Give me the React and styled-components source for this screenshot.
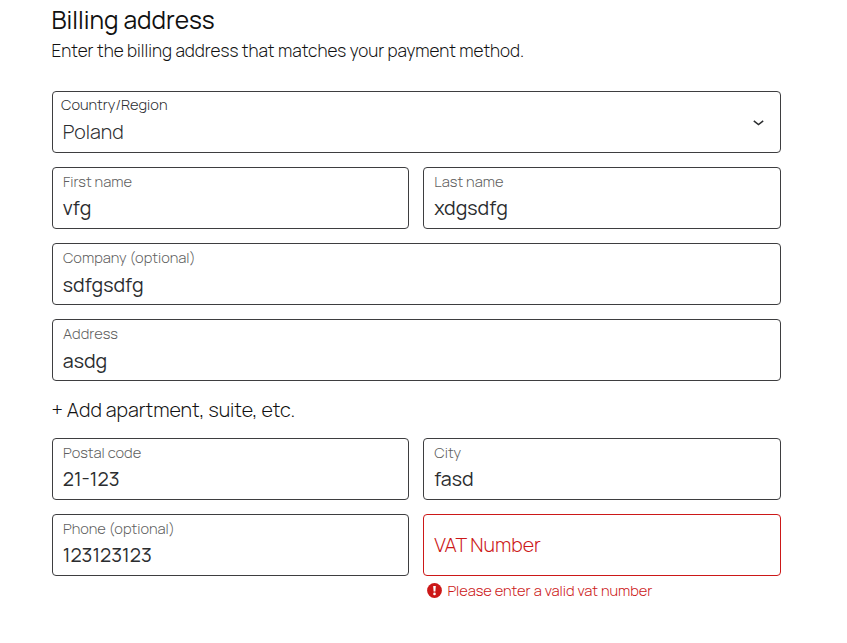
import React from "react";
import styled, { createGlobalStyle } from "styled-components";

const GlobalStyle = createGlobalStyle`
  * { box-sizing: border-box; }
  body { margin: 0; background: #fff; }
`;

const Page = styled.main`
  width: 781px;
  padding: 5px 0 0 51.6px;
  font-family: "Manrope", "Inter", sans-serif;
  color: #111;
`;

const Title = styled.h2`
  margin: 0;
  font-size: 24.5px;
  line-height: 30px;
  font-weight: 400;
`;

const Intro = styled.p`
  margin: 0 0 27px;
  padding-top: 2px;
  font-size: 17.15px;
  line-height: 27px;
  font-weight: 300;
`;

const Form = styled.form`
  display: flex;
  flex-direction: column;
  gap: 14px;
`;

const Row = styled.div`
  display: grid;
  grid-template-columns: 357px 1fr;
  gap: 14.4px;
`;

const Box = styled.div`
  display: flex;
  align-items: center;
  justify-content: space-between;
  height: 62px;
  padding: 0 16px 0 10.2px;
  border: 1px solid ${(p) => (p.$error ? "#cc1818" : "#3e3e40")};
  border-radius: 4px;
`;

const Stack = styled.div`
  display: flex;
  flex-direction: column;
  height: 60px;
  padding-top: ${(p) => (p.$select ? "2px" : "3px")};
`;

const Label = styled.span`
  margin-left: ${(p) => (p.$select ? "-1.8px" : "0.2px")};
  font-size: 14.7px;
  line-height: 20px;
  font-weight: 300;
  color: ${(p) => (p.$select ? "#2b2d2f" : "#5f5f61")};
`;

const Value = styled.span`
  margin-top: ${(p) => (p.$select || p.$low ? "5px" : "4px")};
  font-size: 19.6px;
  line-height: 26px;
  font-weight: ${(p) => (p.$select ? 300 : 400)};
  color: #2b2d2f;
`;

const Placeholder = styled.span`
  font-size: 19.6px;
  font-weight: 300;
  line-height: 26px;
  color: #cc1818;
`;

const AddLine = styled.div`
  height: 29px;
  line-height: 29px;
  font-size: 19.6px;
  font-weight: 300;
`;

const ErrorLine = styled.div`
  display: flex;
  align-items: center;
  gap: 5.4px;
  height: 20px;
  margin-top: 4px;
  padding-left: 4px;
  font-size: 14.7px;
  font-weight: 300;
  line-height: 20px;
  color: #cc1818;
`;

const AlertIcon = styled.svg`
  margin-top: 0.4px;
`;

const Chevron = styled.svg`
  margin-top: 2px;
`;

function Field({ label, value, select, low }) {
  return (
    <Box>
      <Stack $select={select}>
        <Label $select={select}>{label}</Label>
        <Value $select={select} $low={low}>{value}</Value>
      </Stack>
      {select && (
        <Chevron width="11" height="6" viewBox="0 0 11 6" fill="none">
          <path d="M0.8 0.9 5.5 4.6 10.2 0.9" stroke="#2b2d2f" strokeWidth="1.5" />
        </Chevron>
      )}
    </Box>
  );
}

export default function App() {
  return (
    <Page>
      <GlobalStyle />
      <Title>Billing address</Title>
      <Intro>Enter the billing address that matches your payment method.</Intro>
      <Form>
        <Field select label="Country/Region" value="Poland" />
        <Row>
          <Field label="First name" value="vfg" />
          <Field label="Last name" value="xdgsdfg" />
        </Row>
        <Field low label="Company (optional)" value="sdfgsdfg" />
        <Field low label="Address" value="asdg" />
        <AddLine>+ Add apartment, suite, etc.</AddLine>
        <Row>
          <Field label="Postal code" value="21-123" />
          <Field label="City" value="fasd" />
        </Row>
        <Row>
          <Field label="Phone (optional)" value="123123123" />
          <div>
            <Box $error>
              <Placeholder>VAT Number</Placeholder>
            </Box>
            <ErrorLine>
              <AlertIcon width="15" height="15" viewBox="0 0 15 15">
                <circle cx="7.5" cy="7.5" r="7.4" fill="#cc1818" />
                <path d="M6.2 2.9h2.6l-.4 5.6H6.6z" fill="#fff" />
                <circle cx="7.5" cy="10.9" r="1.3" fill="#fff" />
              </AlertIcon>
              Please enter a valid vat number
            </ErrorLine>
          </div>
        </Row>
      </Form>
    </Page>
  );
}
